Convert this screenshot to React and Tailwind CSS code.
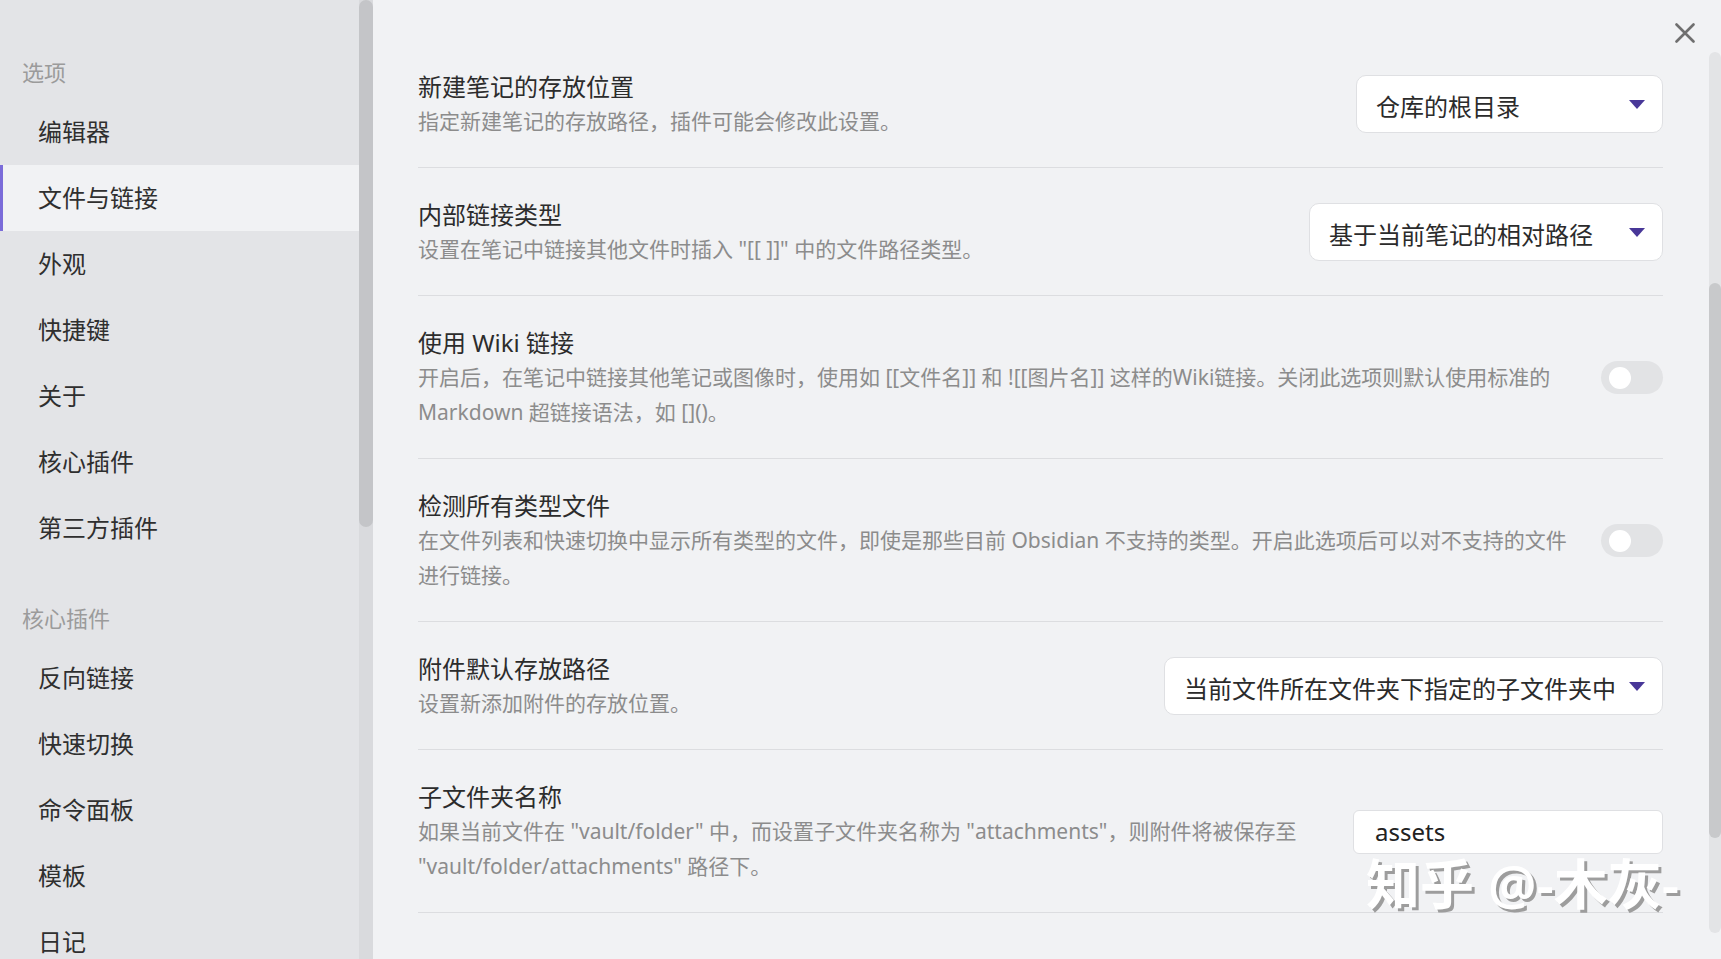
const navGroups = [
  {
    label: '选项',
    items: ['编辑器', '文件与链接', '外观', '快捷键', '关于', '核心插件', '第三方插件'],
  },
  {
    label: '核心插件',
    items: ['反向链接', '快速切换', '命令面板', '模板', '日记'],
  },
]

const settings = [
  {
    title: '新建笔记的存放位置',
    desc: ['指定新建笔记的存放路径，插件可能会修改此设置。'],
    control: { type: 'select', value: '仓库的根目录', width: 'w-[307px]' },
  },
  {
    title: '内部链接类型',
    desc: ['设置在笔记中链接其他文件时插入 "[[ ]]" 中的文件路径类型。'],
    control: { type: 'select', value: '基于当前笔记的相对路径', width: 'w-[354px]' },
  },
  {
    title: '使用 Wiki 链接',
    desc: [
      '开启后，在笔记中链接其他笔记或图像时，使用如 [[文件名]] 和 ![[图片名]] 这样的Wiki链接。关闭此选项则默认使用标准的',
      'Markdown 超链接语法，如 []()。',
    ],
    control: { type: 'toggle' },
  },
  {
    title: '检测所有类型文件',
    desc: [
      '在文件列表和快速切换中显示所有类型的文件，即使是那些目前 Obsidian 不支持的类型。开启此选项后可以对不支持的文件',
      '进行链接。',
    ],
    control: { type: 'toggle' },
  },
  {
    title: '附件默认存放路径',
    desc: ['设置新添加附件的存放位置。'],
    control: { type: 'select', value: '当前文件所在文件夹下指定的子文件夹中', width: 'w-[499px]' },
  },
  {
    title: '子文件夹名称',
    desc: [
      '如果当前文件在 "vault/folder" 中，而设置子文件夹名称为 "attachments"，则附件将被保存至',
      '"vault/folder/attachments" 路径下。',
    ],
    control: { type: 'text', value: 'assets' },
  },
]

function Dropdown({ value, width }) {
  return (
    <div
      className={`flex h-[58px] items-center justify-between rounded-[10px] border border-[#dfe0e3] bg-white pl-[19px] pr-[17px] text-[24px] leading-[30px] text-[#2b2b2b] ${width}`}
    >
      <span className="whitespace-nowrap pt-[6px]">{value}</span>
      <svg width="16" height="9" viewBox="0 0 16 9" className="shrink-0">
        <path d="M0 0H16L8 9Z" fill="#483798" />
      </svg>
    </div>
  )
}

function Toggle() {
  return (
    <div className="flex h-[33px] w-[62px] items-center rounded-full bg-[#e2e3e5] pl-[8px]">
      <div className="h-[22px] w-[22px] rounded-full bg-white" />
    </div>
  )
}

function Control({ control }) {
  if (control.type === 'select') return <Dropdown value={control.value} width={control.width} />
  if (control.type === 'toggle') return <Toggle />
  return (
    <input
      readOnly
      value={control.value}
      className="h-[44px] w-[310px] rounded-[6px] border border-[#dfe0e3] bg-white pl-[21px] text-[24px] text-[#222] outline-none"
    />
  )
}

function SettingRow({ title, desc, control }) {
  return (
    <div className="flex items-center gap-6 border-b border-[#dcdde0] pb-[28px] pt-[29px]">
      <div className="min-w-0 flex-1">
        <div className="text-[24px] leading-[35px] text-[#2c2c2c]">{title}</div>
        {desc.map((line) => (
          <div key={line} className="whitespace-nowrap text-[21px] leading-[35px] text-[#8c8c8c]">
            {line}
          </div>
        ))}
      </div>
      <div className="shrink-0">
        <Control control={control} />
      </div>
    </div>
  )
}

export default function App() {
  return (
    <div className="flex h-[959px] w-full overflow-hidden bg-[#f1f2f4] font-['Noto_Sans','Noto_Sans_CJK_SC',sans-serif]">
      {/* sidebar */}
      <aside className="flex w-[373px] shrink-0">
        <nav className="w-[359px] bg-[#e3e4e7] pt-[57px]">
          {navGroups.map((group, gi) => (
            <div key={group.label}>
              <div
                className={`mb-[12px] pl-[22px] text-[22px] leading-[30px] text-[#9b9b9b] ${gi > 0 ? 'mt-[42px]' : ''}`}
              >
                {group.label}
              </div>
              {group.items.map((item) => {
                const active = gi === 0 && item === '文件与链接'
                return (
                  <div
                    key={item}
                    className={`flex h-[66px] items-center text-[24px] text-[#2f2f2f] ${
                      active ? 'border-l-[3px] border-[#7b6cd9] bg-[#f1f2f4] pl-[35px]' : 'pl-[38px]'
                    }`}
                  >
                    {item}
                  </div>
                )
              })}
            </div>
          ))}
        </nav>
        <div className="w-[14px] bg-[#d9dadd]">
          <div className="h-[527px] rounded-full bg-[#c4c5c8]" />
        </div>
      </aside>

      {/* settings */}
      <main className="relative flex flex-1">
        <div className="flex-1 pl-[45px] pr-[46px] pt-[40px]">
          {settings.map((s) => (
            <SettingRow key={s.title} {...s} />
          ))}
        </div>

        <div className="w-[12px] shrink-0 pt-[52px]">
          <div className="h-[881px] rounded-full bg-[#e3e4e6] pt-[231px]">
            <div className="h-[555px] rounded-full bg-[#c8c9cb]" />
          </div>
        </div>

        <button className="absolute right-[26px] top-[23px] text-[#6f6f6f]" aria-label="close">
          <svg width="20" height="20" viewBox="0 0 20 20">
            <path d="M1.5 1.5L18.5 18.5M18.5 1.5L1.5 18.5" stroke="currentColor" strokeWidth="2.6" strokeLinecap="round" />
          </svg>
        </button>

        <div className="pointer-events-none absolute right-[42px] top-[852px] whitespace-nowrap text-[54px] font-semibold leading-[64px] text-white [text-shadow:3px_3px_0_#9d9d9d]">
          知乎 @-木灰-
        </div>
      </main>
    </div>
  )
}
